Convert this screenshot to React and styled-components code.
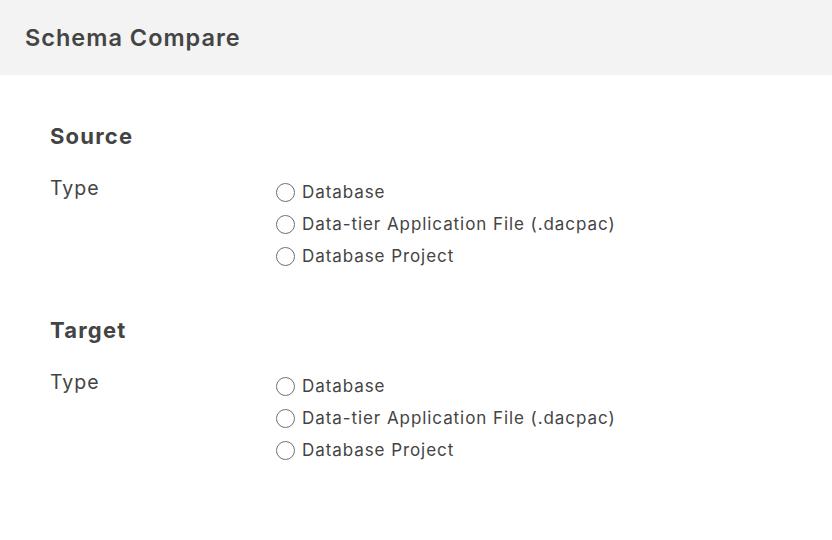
import React from "react";
import styled, { createGlobalStyle } from "styled-components";

const GlobalStyle = createGlobalStyle`
  html, body {
    margin: 0;
    padding: 0;
    background: #ffffff;
    font-family: Inter, "Noto Sans", "Liberation Sans", sans-serif;
    color: #444444;
  }
`;

const Header = styled.header`
  height: 75px;
  background-color: #f3f3f3;
  display: flex;
  align-items: center;
  padding: 0 25px;
  box-sizing: border-box;
`;

const Title = styled.h1`
  margin: 0;
  font-size: 23.5px;
  font-weight: 600;
  letter-spacing: 1px;
  color: #444444;
  padding-bottom: 1px;
`;

const Content = styled.main`
  padding: 46px 50px 0 50px;
`;

const Section = styled.section`
  & + & {
    margin-top: 43px;
  }
`;

const SectionTitle = styled.h2`
  margin: 0 0 22px 0;
  font-size: 22px;
  font-weight: 700;
  letter-spacing: 1.2px;
  line-height: 30px;
  color: #444444;
`;

const FieldRow = styled.div`
  display: grid;
  grid-template-columns: 226px 1fr;
  align-items: start;
`;

const Label = styled.div`
  padding-top: 2px;
  font-size: 19.5px;
  line-height: 26px;
  letter-spacing: 1px;
  color: #444444;
`;

const Options = styled.div`
  display: flex;
  flex-direction: column;
  padding-top: 3px;
`;

const Option = styled.label`
  display: flex;
  align-items: center;
  height: 32px;
  font-size: 17px;
  letter-spacing: 0.93px;
  color: #444444;
  cursor: pointer;
`;

const Circle = styled.span`
  width: 19px;
  height: 19px;
  border: 1.6px solid #707070;
  border-radius: 50%;
  box-sizing: border-box;
  margin-right: 7px;
  flex-shrink: 0;
`;

const types = ["Database", "Data-tier Application File (.dacpac)", "Database Project"];

function TypeSection({ title }) {
  return (
    <Section>
      <SectionTitle>{title}</SectionTitle>
      <FieldRow>
        <Label>Type</Label>
        <Options>
          {types.map((t) => (
            <Option key={t}>
              <Circle />
              {t}
            </Option>
          ))}
        </Options>
      </FieldRow>
    </Section>
  );
}

export default function App() {
  return (
    <>
      <GlobalStyle />
      <Header>
        <Title>Schema Compare</Title>
      </Header>
      <Content>
        <TypeSection title="Source" />
        <TypeSection title="Target" />
      </Content>
    </>
  );
}
